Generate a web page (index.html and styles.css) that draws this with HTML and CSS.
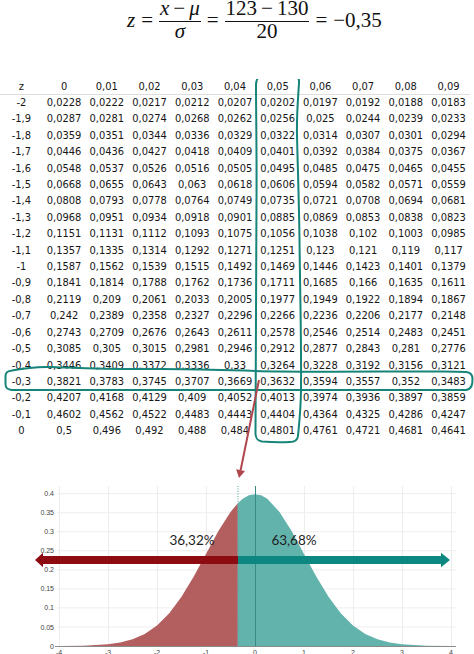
FILE: index.html
```html
<!DOCTYPE html>
<html lang="ru">
<head>
    <meta charset="UTF-8">
    <meta name="viewport" content="width=device-width, initial-scale=1.0">
    <title>Z-таблица</title>
    <link rel="stylesheet" href="styles.css">
</head>
<body>
    <div class="formula">
        <i>z</i><span class="op">=</span>
        <span class="frac"><span class="num"><i>x</i><span class="minus">−</span><i>μ</i></span><span class="den"><i>σ</i></span></span>
        <span class="op">=</span>
        <span class="frac"><span class="num">123<span class="minus">−</span>130</span><span class="den">20</span></span>
        <span class="op">=</span><span>−0,35</span>
    </div>

    <div class="sheet">
        <table class="ztable">
            <thead>
                <tr><th>z</th><th>0</th><th>0,01</th><th>0,02</th><th>0,03</th><th>0,04</th><th>0,05</th><th>0,06</th><th>0,07</th><th>0,08</th><th>0,09</th></tr>
            </thead>
            <tbody>
                <tr><td>-2</td><td>0,0228</td><td>0,0222</td><td>0,0217</td><td>0,0212</td><td>0,0207</td><td>0,0202</td><td>0,0197</td><td>0,0192</td><td>0,0188</td><td>0,0183</td></tr>
                <tr><td>-1,9</td><td>0,0287</td><td>0,0281</td><td>0,0274</td><td>0,0268</td><td>0,0262</td><td>0,0256</td><td>0,025</td><td>0,0244</td><td>0,0239</td><td>0,0233</td></tr>
                <tr><td>-1,8</td><td>0,0359</td><td>0,0351</td><td>0,0344</td><td>0,0336</td><td>0,0329</td><td>0,0322</td><td>0,0314</td><td>0,0307</td><td>0,0301</td><td>0,0294</td></tr>
                <tr><td>-1,7</td><td>0,0446</td><td>0,0436</td><td>0,0427</td><td>0,0418</td><td>0,0409</td><td>0,0401</td><td>0,0392</td><td>0,0384</td><td>0,0375</td><td>0,0367</td></tr>
                <tr><td>-1,6</td><td>0,0548</td><td>0,0537</td><td>0,0526</td><td>0,0516</td><td>0,0505</td><td>0,0495</td><td>0,0485</td><td>0,0475</td><td>0,0465</td><td>0,0455</td></tr>
                <tr><td>-1,5</td><td>0,0668</td><td>0,0655</td><td>0,0643</td><td>0,063</td><td>0,0618</td><td>0,0606</td><td>0,0594</td><td>0,0582</td><td>0,0571</td><td>0,0559</td></tr>
                <tr><td>-1,4</td><td>0,0808</td><td>0,0793</td><td>0,0778</td><td>0,0764</td><td>0,0749</td><td>0,0735</td><td>0,0721</td><td>0,0708</td><td>0,0694</td><td>0,0681</td></tr>
                <tr><td>-1,3</td><td>0,0968</td><td>0,0951</td><td>0,0934</td><td>0,0918</td><td>0,0901</td><td>0,0885</td><td>0,0869</td><td>0,0853</td><td>0,0838</td><td>0,0823</td></tr>
                <tr><td>-1,2</td><td>0,1151</td><td>0,1131</td><td>0,1112</td><td>0,1093</td><td>0,1075</td><td>0,1056</td><td>0,1038</td><td>0,102</td><td>0,1003</td><td>0,0985</td></tr>
                <tr><td>-1,1</td><td>0,1357</td><td>0,1335</td><td>0,1314</td><td>0,1292</td><td>0,1271</td><td>0,1251</td><td>0,123</td><td>0,121</td><td>0,119</td><td>0,117</td></tr>
                <tr><td>-1</td><td>0,1587</td><td>0,1562</td><td>0,1539</td><td>0,1515</td><td>0,1492</td><td>0,1469</td><td>0,1446</td><td>0,1423</td><td>0,1401</td><td>0,1379</td></tr>
                <tr><td>-0,9</td><td>0,1841</td><td>0,1814</td><td>0,1788</td><td>0,1762</td><td>0,1736</td><td>0,1711</td><td>0,1685</td><td>0,166</td><td>0,1635</td><td>0,1611</td></tr>
                <tr><td>-0,8</td><td>0,2119</td><td>0,209</td><td>0,2061</td><td>0,2033</td><td>0,2005</td><td>0,1977</td><td>0,1949</td><td>0,1922</td><td>0,1894</td><td>0,1867</td></tr>
                <tr><td>-0,7</td><td>0,242</td><td>0,2389</td><td>0,2358</td><td>0,2327</td><td>0,2296</td><td>0,2266</td><td>0,2236</td><td>0,2206</td><td>0,2177</td><td>0,2148</td></tr>
                <tr><td>-0,6</td><td>0,2743</td><td>0,2709</td><td>0,2676</td><td>0,2643</td><td>0,2611</td><td>0,2578</td><td>0,2546</td><td>0,2514</td><td>0,2483</td><td>0,2451</td></tr>
                <tr><td>-0,5</td><td>0,3085</td><td>0,305</td><td>0,3015</td><td>0,2981</td><td>0,2946</td><td>0,2912</td><td>0,2877</td><td>0,2843</td><td>0,281</td><td>0,2776</td></tr>
                <tr><td>-0,4</td><td>0,3446</td><td>0,3409</td><td>0,3372</td><td>0,3336</td><td>0,33</td><td>0,3264</td><td>0,3228</td><td>0,3192</td><td>0,3156</td><td>0,3121</td></tr>
                <tr><td>-0,3</td><td>0,3821</td><td>0,3783</td><td>0,3745</td><td>0,3707</td><td>0,3669</td><td>0,3632</td><td>0,3594</td><td>0,3557</td><td>0,352</td><td>0,3483</td></tr>
                <tr><td>-0,2</td><td>0,4207</td><td>0,4168</td><td>0,4129</td><td>0,409</td><td>0,4052</td><td>0,4013</td><td>0,3974</td><td>0,3936</td><td>0,3897</td><td>0,3859</td></tr>
                <tr><td>-0,1</td><td>0,4602</td><td>0,4562</td><td>0,4522</td><td>0,4483</td><td>0,4443</td><td>0,4404</td><td>0,4364</td><td>0,4325</td><td>0,4286</td><td>0,4247</td></tr>
                <tr><td>0</td><td>0,5</td><td>0,496</td><td>0,492</td><td>0,488</td><td>0,484</td><td>0,4801</td><td>0,4761</td><td>0,4721</td><td>0,4681</td><td>0,4641</td></tr>
            </tbody>
        </table>

        <!-- the plot; viewBox keeps page coordinates -->
        <svg class="chart" width="474" height="174" viewBox="0 480 474 174">
            <g class="grid">
                <line x1="59.5" y1="485" x2="59.5" y2="645"/>
                <line x1="108.5" y1="485" x2="108.5" y2="645"/>
                <line x1="157.5" y1="485" x2="157.5" y2="645"/>
                <line x1="206.5" y1="485" x2="206.5" y2="645"/>
                <line x1="304.5" y1="485" x2="304.5" y2="645"/>
                <line x1="353.5" y1="485" x2="353.5" y2="645"/>
                <line x1="402.5" y1="485" x2="402.5" y2="645"/>
                <line x1="451.5" y1="485" x2="451.5" y2="645"/>
                <line x1="57" y1="492.7" x2="456" y2="492.7"/>
                <line x1="57" y1="511.8" x2="456" y2="511.8"/>
                <line x1="57" y1="530.8" x2="456" y2="530.8"/>
                <line x1="57" y1="549.8" x2="456" y2="549.8"/>
                <line x1="57" y1="568.9" x2="456" y2="568.9"/>
                <line x1="57" y1="587.9" x2="456" y2="587.9"/>
                <line x1="57" y1="606.9" x2="456" y2="606.9"/>
                <line x1="57" y1="626" x2="456" y2="626"/>
            </g>
            <path class="area-left" d="M59 645 L59 644.95 L83.5 644.67 L108 643.31 L120.25 641.54 L132.5 638.33 L144.75 632.92 L157 624.45 L169.25 612.15 L181.5 595.69 L193.75 575.46 L206 552.88 L218.25 530.36 L230.5 510.97 L237.85 502.15 L237.85 645 Z"/>
            <path class="area-right" d="M237.85 645 L237.85 502.15 L242.75 497.79 L248.88 494.3 L255 493.13 L261.13 494.3 L267.25 497.79 L279.5 510.97 L291.75 530.36 L304 552.88 L316.25 575.46 L328.5 595.69 L340.75 612.15 L353 624.45 L365.25 632.92 L377.5 638.33 L389.75 641.54 L402 643.31 L426.5 644.67 L451 644.95 L451 645 Z"/>
            <line class="zero" x1="255.5" y1="485" x2="255.5" y2="645"/>
            <line class="cut" x1="238" y1="485" x2="238" y2="645"/>
            <line class="axis" x1="55" y1="645.5" x2="456" y2="645.5"/>

            <g class="ylabels">
                <text x="54" y="495.2">0.4</text>
                <text x="54" y="514.3">0.35</text>
                <text x="54" y="533.3">0.3</text>
                <text x="54" y="552.3">0.25</text>
                <text x="54" y="571.4">0.2</text>
                <text x="54" y="590.4">0.15</text>
                <text x="54" y="609.4">0.1</text>
                <text x="54" y="628.5">0.05</text>
                <text x="54" y="647.5">0</text>
            </g>
            <g class="xlabels">
                <text x="59" y="653.5">-4</text>
                <text x="108" y="653.5">-3</text>
                <text x="157" y="653.5">-2</text>
                <text x="206" y="653.5">-1</text>
                <text x="255" y="653.5">0</text>
                <text x="304" y="653.5">1</text>
                <text x="353" y="653.5">2</text>
                <text x="402" y="653.5">3</text>
                <text x="451" y="653.5">4</text>
            </g>

            <path class="arrow-left" d="M238 555 L43 555 L43 551.7 L35 559 L43 566.3 L43 563 L238 563 Z"/>
            <path class="arrow-right" d="M238 555 L441 555 L441 551.7 L450 559 L441 566.3 L441 563 L238 563 Z"/>
            <text class="share" x="192" y="544">36,32%</text>
            <text class="share" x="294" y="544">63,68%</text>
        </svg>

        <!-- hand drawn marks over the table -->
        <svg class="marks" width="474" height="575" viewBox="0 79 474 575">
            <path class="pen" d="M264 75.5 C274 74.5 286 74 293 75 C297.5 75.7 299.5 78 299 83 C298 100 296.5 115 297 135 C297.5 160 299 200 299.5 240 C300 290 301.5 340 301 390 C300.8 410 299 425 298 436 C297.5 440.5 295 442 290 442 C280 442.5 268 442 262 441.5 C257.5 441 256 439 255.5 434 C255 400 256 300 256.5 200 C256.8 150 256 110 256 85 C256 79 258 76 264 75.5 Z"/>
            <path class="pen" d="M12 370.5 C25 368 35 366.5 50 367 C80 368 110 369.5 150 369 C190 368.5 230 370.5 280 371.5 C330 372 380 371.5 420 371.5 C440 371.5 455 371 466 372 C471 372.5 472.5 375 472.5 379 C472.5 384 472 389 466 390 C400 390.5 200 390.5 12 390 C7 389.5 5.5 388 5.5 384 L5.5 376 C5.5 372.5 7 371 12 370.5 Z"/>
            <line class="pointer" x1="259" y1="380" x2="240.6" y2="470.2"/>
            <path class="pointer-head" d="M239 478 L245 471.1 L236.2 469.3 Z"/>
        </svg>
    </div>
</body>
</html>
```

FILE: styles.css
```css
*{
    margin: 0;
    padding: 0;
}
html, body{
    overflow: hidden;
}
body{
    width: 474px;
    height: 654px;
    background: #fff;
    color: #222;
}

.formula{
    display: flex;
    align-items: center;
    height: 46px;
    margin-top: -3px;
    padding-left: 127px;
    font-family: "Liberation Serif", serif;
    font-size: 21px;
    line-height: 21px;
    color: #111;
}
.formula .op{
    margin: 0 6px;
}
.formula .minus{
    margin: 0 4px;
}
.frac{
    display: inline-flex;
    flex-direction: column;
    align-items: center;
}
.frac .num{
    padding: 0 1px 2px;
    border-bottom: 1.3px solid #111;
}
.frac .den{
    margin-top: -1px;
}

.sheet{
    position: relative;
    margin-top: 36px;
}
.ztable{
    width: 470px;
    table-layout: fixed;
    border-collapse: collapse;
    font-family: "DejaVu Sans Condensed", "DejaVu Sans", sans-serif;
    font-size: 11px;
    color: #161616;
}
.ztable th{
    font-weight: normal;
    height: 15px;
    padding: 0;
    border-bottom: 1px solid #dedede;
    text-align: center;
}
.ztable td{
    height: 16.4px;
    padding: 0;
    line-height: 16.4px;
    text-align: center;
}

.chart{
    display: block;
    margin-top: 41px;
}
.chart .grid line{
    stroke: #ededed;
    stroke-width: 1;
}
.chart .area-left{
    fill: #b45f5f;
}
.chart .area-right{
    fill: #63b3ad;
}
.chart .zero{
    stroke: #3a8a84;
    stroke-width: 1;
}
.chart .cut{
    stroke: #4e9f99;
    stroke-width: 1;
    stroke-dasharray: 1 1.5;
}
.chart .axis{
    stroke: #8a8a8a;
    stroke-width: 1;
}
.chart .ylabels text,
.chart .xlabels text{
    font-family: "Liberation Sans", Arial, sans-serif;
    font-size: 7px;
    fill: #444;
}
.chart .ylabels text{
    text-anchor: end;
}
.chart .xlabels text{
    text-anchor: middle;
}
.chart .arrow-left{
    fill: #8c0c12;
}
.chart .arrow-right{
    fill: #0d8880;
}
.chart .share{
    font-family: Lato, "Open Sans", sans-serif;
    font-size: 13.5px;
    fill: #1e1e1e;
    text-anchor: middle;
}

.marks{
    position: absolute;
    left: 0;
    top: 0;
    pointer-events: none;
}
.marks .pen{
    fill: none;
    stroke: #168479;
    stroke-width: 2;
}
.marks .pointer{
    stroke: #b0464e;
    stroke-width: 2;
}
.marks .pointer-head{
    fill: #b0464e;
}
```
